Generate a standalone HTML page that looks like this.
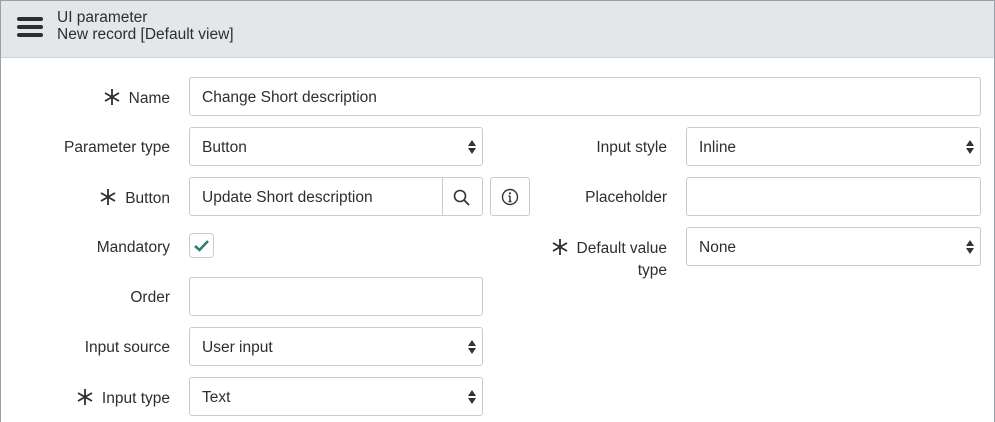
<!DOCTYPE html>
<html><head><style>
*{box-sizing:border-box;margin:0;padding:0}
body{width:995px;height:422px;overflow:hidden;background:#fff;font-family:"Liberation Sans",sans-serif;color:#2e2e2e;position:relative}
.frame{position:absolute;left:0;top:0;width:995px;height:422px;border:1px solid #9aa0a6;border-bottom:none}
.hdr{position:absolute;left:1px;top:1px;width:993px;height:57px;background:#e4e7ea;border-bottom:1px solid #cfd3d6}
.burger{position:absolute;left:16px;width:26px;height:4px;background:#2e2e2e;border-radius:2px}
.t1{position:absolute;left:56px;top:8px;font-size:15.5px}
.t2{position:absolute;left:56px;top:25px;font-size:15.5px}
.lbl{position:absolute;font-size:15.5px;text-align:right;width:300px;line-height:20px}
.inp{position:absolute;height:39px;border:1px solid #c9cccf;border-radius:3px;font-size:15.5px;padding-left:12px;line-height:39px;background:#fff}
.ar{position:absolute;right:6px;top:12px;width:8px;height:14px}
.star{display:inline-block;width:18px;height:18px;vertical-align:-3px;margin-right:8px}
</style></head><body>
<div class="frame"></div>
<div class="hdr">
<div class="burger" style="top:16px"></div><div class="burger" style="top:24px"></div><div class="burger" style="top:32px"></div>
<div class="t1">UI parameter</div><div class="t2">New record [Default view]</div>
</div>
<svg width="0" height="0" style="position:absolute"><defs><symbol id="st" viewBox="0 0 18 18"><path d="M9 1V17M2 5L16 13M2 13L16 5" stroke="#2e2e2e" stroke-width="1.8"/></symbol></defs></svg>
<div class="lbl" style="left:-130px;top:88px"><svg class="star"><use href="#st"/></svg>Name</div>
<div class="inp" style="left:189px;top:77px;width:792px">Change Short description</div>

<div class="lbl" style="left:-130px;top:138px">Parameter type</div>
<div class="inp" style="left:189px;top:127px;width:294px">Button<svg class="ar" viewBox="0 0 8 14"><path d="M0 6L4 0L8 6ZM0 8L4 14L8 8Z" fill="#333"/></svg></div>
<div class="lbl" style="left:367px;top:138px">Input style</div>
<div class="inp" style="left:686px;top:127px;width:295px">Inline<svg class="ar" viewBox="0 0 8 14"><path d="M0 6L4 0L8 6ZM0 8L4 14L8 8Z" fill="#333"/></svg></div>

<div class="lbl" style="left:-130px;top:188px"><svg class="star"><use href="#st"/></svg>Button</div>
<div class="inp" style="left:189px;top:177px;width:294px">Update Short description
<div style="position:absolute;left:252px;top:0;width:1px;height:37px;background:#c9cccf"></div>
<svg style="position:absolute;left:263px;top:11px" width="18" height="18" viewBox="0 0 18 18"><circle cx="7" cy="7" r="5.5" fill="none" stroke="#333" stroke-width="1.6"/><path d="M11 11L16 16" stroke="#333" stroke-width="1.8"/></svg></div>
<div class="inp" style="left:490px;top:177px;width:40px;padding:0"><svg style="position:absolute;left:10px;top:10px" width="18" height="18" viewBox="0 0 18 18"><circle cx="9" cy="9" r="7.5" fill="none" stroke="#333" stroke-width="1.4"/><circle cx="9" cy="5.3" r="1.1" fill="#333"/><path d="M9 8v5.5M7.5 13.5h3M7.5 8h1.5" stroke="#333" stroke-width="1.4" fill="none"/></svg></div>
<div class="lbl" style="left:367px;top:188px">Placeholder</div>
<div class="inp" style="left:686px;top:177px;width:295px"></div>

<div class="lbl" style="left:-130px;top:238px">Mandatory</div>
<div class="inp" style="left:189px;top:233px;width:25px;height:25px;border-radius:4px;padding:0"><svg style="position:absolute;left:3px;top:4px" width="17" height="15" viewBox="0 0 17 15"><path d="M2 8L6.5 12L15 3" stroke="#2f7d6d" stroke-width="2.6" fill="none"/></svg></div>
<div class="lbl" style="left:367px;top:238px"><svg class="star"><use href="#st"/></svg>Default value</div>
<div class="lbl" style="left:367px;top:261px">type</div>
<div class="inp" style="left:686px;top:227px;width:295px">None<svg class="ar" viewBox="0 0 8 14"><path d="M0 6L4 0L8 6ZM0 8L4 14L8 8Z" fill="#333"/></svg></div>

<div class="lbl" style="left:-130px;top:288px">Order</div>
<div class="inp" style="left:189px;top:277px;width:294px"></div>

<div class="lbl" style="left:-130px;top:338px">Input source</div>
<div class="inp" style="left:189px;top:327px;width:294px">User input<svg class="ar" viewBox="0 0 8 14"><path d="M0 6L4 0L8 6ZM0 8L4 14L8 8Z" fill="#333"/></svg></div>

<div class="lbl" style="left:-130px;top:388px"><svg class="star"><use href="#st"/></svg>Input type</div>
<div class="inp" style="left:189px;top:377px;width:294px">Text<svg class="ar" viewBox="0 0 8 14"><path d="M0 6L4 0L8 6ZM0 8L4 14L8 8Z" fill="#333"/></svg></div>
</body></html>
